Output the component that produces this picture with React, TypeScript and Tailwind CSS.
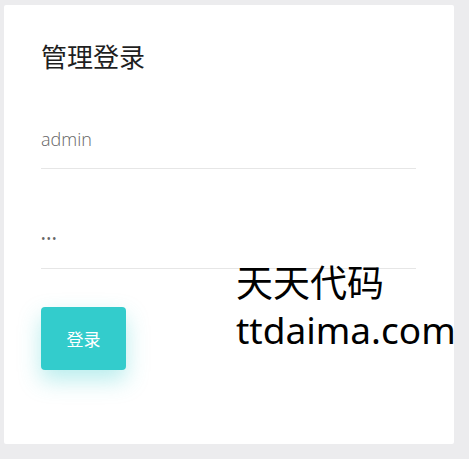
import { useState } from 'react'

export default function App() {
  const [user, setUser] = useState('admin')
  const [pwd, setPwd] = useState('123')

  return (
    <div className="relative min-h-screen w-full overflow-hidden bg-[#ececee] pl-[4px] pt-[5px] font-['Open_Sans','Noto_Sans_CJK_SC',sans-serif]">
      <div className="flex h-[439px] w-[450px] flex-col rounded-[2px] bg-white px-[37px] pt-[31px]">
        <h2 className="font-['Noto_Sans_CJK_SC',sans-serif] text-[26px] leading-[40px] text-[#1f1f1f]">管理登录</h2>

        <input value={user} onChange={e => setUser(e.target.value)}
          className="mt-[33px] h-[60px] w-[375px] border-b border-[#e6e6e6] bg-transparent text-[18px] font-light text-[#666] outline-none" />
        <input type="password" value={pwd} onChange={e => setPwd(e.target.value)}
          className="mt-[40px] h-[60px] w-[375px] border-b border-[#e6e6e6] bg-transparent text-[12px] tracking-[1px] text-[#666] outline-none" />

        <button className="mt-[38px] flex h-[63px] w-[85px] items-center justify-center rounded-[4px] bg-[#33cccc] font-['Noto_Sans_CJK_SC',sans-serif] text-[17px] text-white shadow-[0_10px_22px_rgba(51,204,204,0.35)]">
          登录
        </button>
      </div>

      {/* site watermark over the card */}
      <div className="pointer-events-none absolute left-[236px] top-[259px] font-['Noto_Sans','Noto_Sans_CJK_SC',sans-serif] text-[37px] leading-[47px] text-black">
        <div>天天代码</div>
        <div>ttdaima.com</div>
      </div>
    </div>
  )
}
